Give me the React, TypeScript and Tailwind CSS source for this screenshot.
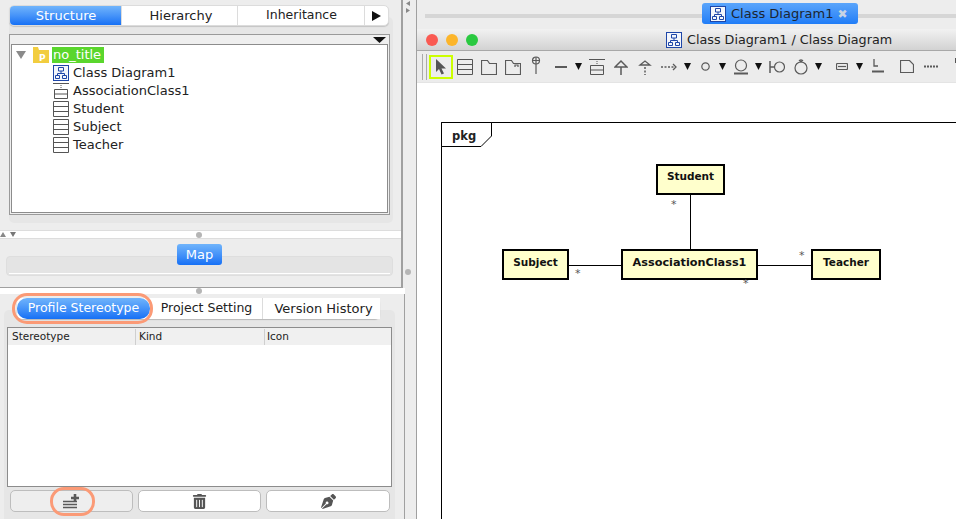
import type { ReactNode } from "react";
import { FaPenNib, FaTrashAlt } from "react-icons/fa";

const ink = "#5a5a5a";

function Tri({ className }: { className: string }) {
  return (
    <svg className={className} width="7" height="7" viewBox="0 0 7 7">
      <path d="M0 0H7L3.5 7Z" fill="#111" />
    </svg>
  );
}

function Icon({ className, w, h = 18, children }: { className: string; w: number; h?: number; children: ReactNode }) {
  return (
    <svg className={className} width={w} height={h} viewBox={`0 0 ${w} ${h}`} fill="none" stroke={ink} strokeWidth="1.2">
      {children}
    </svg>
  );
}

function ClassIcon() {
  return (
    <svg className="shrink-0" width="16" height="16" viewBox="0 0 16 16" fill="none" stroke="#555" strokeWidth="1">
      <path d="M.5.5h15v15H.5zM.5 5.5h15M.5 10.5h15" />
    </svg>
  );
}

function DiagramIcon({ size = 16 }: { size?: number }) {
  return (
    <svg className="shrink-0" width={size} height={size} viewBox="0 0 16 16" fill="none" stroke="#1e46a8" strokeWidth="1">
      <rect x=".5" y=".5" width="15" height="15" fill="#f4f6fb" />
      <path d="M5.5 2.5h5v3.500h-5zM2.500 10.500h4v3h-4zM9.500 10.500h4v3h-4zM8 6v2.500M4.500 10.500v-2h7v2" />
    </svg>
  );
}

function AssocIcon({ className = "" }: { className?: string }) {
  return (
    <svg className={`shrink-0 ${className}`} width="16" height="16" viewBox="0 0 16 16" fill="none" stroke="#555" strokeWidth="1">
      <path d="M0 .5h16M8 2v1M8 4v1M1.500 6.500h13v9h-13zM1.500 11h13" />
    </svg>
  );
}

function TreeRow({ icon, label }: { icon: ReactNode; label: string }) {
  return (
    <div className="flex h-[18px] items-center gap-[4px] pl-[41px]">
      {icon}
      <span>{label}</span>
    </div>
  );
}

function Toolbar() {
  return (
    <div className="flex h-[32px] shrink-0 items-center border-b border-[#e4e4e4] bg-[#ececec]">
      <div className="ml-[5px] h-[26px] w-[2px] border-l border-[#aaa]" />
      <div className="ml-[2px] h-[26px] w-[2px] border-l border-[#aaa]" />
      <div className="ml-[1px] flex h-[24px] w-[24px] items-center justify-center border-2 border-[#ccff00]">
        <svg width="12" height="16" viewBox="0 0 12 16">
          <path d="M1 0v13l3-3 2.500 5.500 2.500-1-2.500-5H11Z" fill="#555" />
        </svg>
      </div>
      <div className="ml-[4px]"><ClassIcon /></div>
      <Icon className="ml-[8px]" w={16} h={16}><path d="M.5 15.500V1.500h6l2 3h7v11z" /></Icon>
      <Icon className="ml-[8px]" w={16} h={16}><path d="M.5 15.500V1.500h6l2 3h7v11zM10 8V6h3v2" /></Icon>
      <Icon className="ml-[10px] -mt-[4px]" w={10} h={18}><circle cx="5" cy="4.500" r="3.500" /><path d="M5 1v17M1.500 4.500h7" /></Icon>
      <Icon className="ml-[14px]" w={12} h={4}><path d="M0 2h12" strokeWidth="2" /></Icon>
      <Tri className="ml-[8px]" />
      <div className="ml-[7px]"><AssocIcon /></div>
      <Icon className="ml-[9px]" w={14} h={16}><path d="M1 8l6-6 6 6zM7 8v8" strokeWidth="1.500" /></Icon>
      <Icon className="ml-[10px]" w={14} h={16}><path d="M2 6l5-4 5 4z" strokeWidth="1.300" /><path d="M7 8v8" strokeWidth="1.500" strokeDasharray="2 1.500" /></Icon>
      <Icon className="ml-[9px]" w={16} h={10}><path d="M0 5h13" strokeWidth="1.500" strokeDasharray="2 1.500" /><path d="M12 2l3 3-3 3" strokeWidth="1.300" /></Icon>
      <Tri className="ml-[7px]" />
      <Icon className="ml-[10px]" w={9} h={9}><circle cx="4.500" cy="4.500" r="3.700" /></Icon>
      <Tri className="ml-[9px]" />
      <Icon className="ml-[8px]" w={14} h={16}><circle cx="7" cy="6.500" r="5.500" /><path d="M0 14.500h14" strokeWidth="2" /></Icon>
      <Tri className="ml-[7px]" />
      <Icon className="ml-[7px]" w={16} h={12}><circle cx="10.500" cy="6" r="5" /><path d="M1 0v12M1 6h4" strokeWidth="1.500" /></Icon>
      <Icon className="ml-[9px]" w={14} h={16}><circle cx="7" cy="9" r="6" /><path d="M7 0v3M5 1l2 2 2-2" /></Icon>
      <Tri className="ml-[7px]" />
      <Icon className="ml-[14px]" w={12} h={7}><rect x=".5" y=".5" width="11" height="6" rx="1" /><path d="M2 3.500h8" /></Icon>
      <Tri className="ml-[8px]" />
      <Icon className="ml-[9px] -mt-[2px]" w={12} h={14}><path d="M2 0v7h4" strokeWidth="1.300" /><path d="M0 12.500h12" strokeWidth="2" /></Icon>
      <Icon className="ml-[16px]" w={14} h={13}><path d="M.5.500h9l4 4v8H.5z" /></Icon>
      <Icon className="ml-[10px]" w={14} h={3}><path d="M0 1.500h14" strokeWidth="2" strokeDasharray="2 1" /></Icon>
      <div className="ml-[17px] h-[5px] w-[1px] -translate-y-[6px] bg-[#555]" />
    </div>
  );
}

function UmlBox({ className, label }: { className: string; label: string }) {
  return (
    <div className={`absolute flex h-[31px] items-center justify-center border-2 border-black bg-[#ffffcc] font-bold text-[#111] ${className}`}>
      {label}
    </div>
  );
}

function Star({ className }: { className: string }) {
  return <span className={`absolute text-[11px] leading-none text-[#555] ${className}`}>*</span>;
}

function Canvas() {
  return (
    <div className="relative min-h-0 flex-1 overflow-hidden bg-white">
      <div className="absolute left-[24px] top-[39px] h-[500px] w-[600px] border border-black" />
      <svg className="absolute left-[24px] top-[39px]" width="52" height="26" viewBox="0 0 52 26" fill="#fff" stroke="#000">
        <path d="M.5.500H50.500V14L40 24.500H.5Z" />
      </svg>
      <span className="absolute left-[35px] top-[45px] text-[11.500px] font-bold text-[#222]">pkg</span>
      <svg className="absolute left-[0px] top-[0px]" width="539" height="220" viewBox="0 0 539 220" stroke="#000" strokeWidth="1">
        <path d="M273.500 112v55M152 182.500h52M341 182.500h54" />
      </svg>
      <UmlBox className="left-[239px] top-[81px] w-[69px] pb-[5px] text-[10.500px]" label="Student" />
      <UmlBox className="left-[85px] top-[166px] w-[67px] pb-[3px] text-[10.500px]" label="Subject" />
      <UmlBox className="left-[204px] top-[166px] w-[137px] pb-[3px] text-[11.250px]" label="AssociationClass1" />
      <UmlBox className="left-[394px] top-[166px] w-[70px] pb-[3px] text-[10.500px]" label="Teacher" />
      <Star className="left-[254px] top-[116px]" />
      <Star className="left-[158px] top-[185px]" />
      <Star className="left-[382px] top-[167px]" />
      <Star className="left-[326px] top-[195px]" />
    </div>
  );
}

function TabButton({ label, className, active }: { label: string; className: string; active?: boolean }) {
  return (
    <div
      className={`flex items-center justify-center ${className} ${
        active ? "bg-gradient-to-b from-[#70b4fb] to-[#1470f5] text-white" : "border-l border-[#dcdcdc] bg-white text-[#222]"
      }`}
    >
      {label}
    </div>
  );
}

export default function App() {
  return (
    <div
      className="relative flex h-[519px] w-[956px] overflow-hidden bg-[#ededed] text-[13px] text-[#222]"
      style={{ fontFamily: '"DejaVu Sans", sans-serif' }}
    >
      {/* left column */}
      <div className="flex w-[405px] shrink-0 flex-col">
        <div className="h-[288px] w-[403px] shrink-0 border-b border-r-2 border-[#a0a0a0]">
          <div className="relative z-10 ml-[9px] mt-[5px] flex h-[21px] w-[380px] overflow-hidden rounded-[5px] border border-[#dcdcdc] bg-white shadow-[0_1px_1px_rgba(0,0,0,0.15)]">
            <TabButton active label="Structure" className="w-[111px] pl-[1px]" />
            <TabButton label="Hierarchy" className="w-[116px] pl-[3px]" />
            <TabButton label="Inheritance" className="w-[127px] pl-[1px] text-[12.500px]" />
            <div className="flex flex-1 items-center justify-center border-l border-[#dcdcdc]">
              <svg width="9" height="10" viewBox="0 0 9 10"><path d="M0 0L9 5L0 10Z" fill="#111" /></svg>
            </div>
          </div>
          <div className="-mt-[9px] ml-[9px] h-[206px] w-[384px] rounded-[5px] bg-[#e6e6e6] pt-[17px]">
            <div className="h-[181px] w-[381px] border border-[#9a9a9a] bg-[#efefef] px-[1px]">
              <div className="flex h-[9px] justify-end pr-[2px] pt-[2px]">
                <svg width="13" height="6" viewBox="0 0 13 6"><path d="M0 0H13L6.500 6Z" fill="#111" /></svg>
              </div>
              <div className="h-[169px] border border-[#8c8c8c] bg-white pt-[1px]">
                <div className="flex h-[18px] items-center pl-[4px]">
                  <svg width="10" height="8" viewBox="0 0 10 8"><path d="M0 0H10L5 8Z" fill="#8a8a8a" /></svg>
                  <svg className="ml-[7px]" width="16" height="16" viewBox="0 0 16 16">
                    <path d="M0 0H5L6 3H16V16H0Z" fill="#f2cd3f" />
                    <text x="6" y="13.500" fontSize="9" fontWeight="700" fill="#fff" fontFamily="DejaVu Sans">P</text>
                  </svg>
                  <span className="ml-[3px] flex h-[16px] w-[52px] items-center bg-[#5ad62d] pl-[1px] text-white">no_title</span>
                </div>
                <TreeRow icon={<DiagramIcon />} label="Class Diagram1" />
                <TreeRow icon={<AssocIcon />} label="AssociationClass1" />
                <TreeRow icon={<ClassIcon />} label="Student" />
                <TreeRow icon={<ClassIcon />} label="Subject" />
                <TreeRow icon={<ClassIcon />} label="Teacher" />
              </div>
            </div>
          </div>
          {/* splitter */}
          <div className="mt-[7px] flex h-[9px] items-center justify-between border-y border-[#dddddd] bg-white pr-[199px]">
            <div className="flex gap-[4px]">
              <svg width="6" height="5" viewBox="0 0 6 5"><path d="M3 0L6 5H0Z" fill="#888" /></svg>
              <svg width="6" height="5" viewBox="0 0 6 5"><path d="M0 0H6L3 5Z" fill="#777" /></svg>
            </div>
            <div className="h-[6px] w-[6px] rounded-full bg-[#b5b5b5]" />
          </div>
          {/* map */}
          <div className="relative z-10 ml-[177px] mt-[5px] flex h-[21px] w-[45px] items-center justify-center rounded-[3px] bg-gradient-to-b from-[#70b4fb] to-[#1470f5] text-white">
            Map
          </div>
          <div className="-mt-[9px] ml-[6px] h-[20px] w-[387px] rounded-[4px] border border-[#dedede] bg-[#e4e4e4]">
            <div className="mx-[2px] mt-[16px] h-[1px] bg-white" />
          </div>
        </div>
        <div className="flex h-[6px] shrink-0 justify-center bg-white pr-[8px]">
          <div className="h-[6px] w-[6px] rounded-full bg-[#b5b5b5]" />
        </div>
        {/* bottom pane */}
        <div className="min-h-0 flex-1 border-r border-[#a0a0a0]">
          <div className="relative z-10 ml-[17px] mt-[4px] flex h-[21px] w-[363px] rounded-[5px] bg-white shadow-[0_1px_1px_rgba(0,0,0,0.2)]">
            <TabButton active label="Profile Stereotype" className="w-[133px] rounded-[10px] text-[12.500px]" />
            <TabButton label="Project Setting" className="w-[112px] border-l-0 pl-[1px] text-[12.500px]" />
            <TabButton label="Version History" className="w-[118px] pl-[4px]" />
            <div className="absolute -left-[5px] -top-[5px] h-[31px] w-[141px] rounded-[15px] border-[3px] border-[#fb9a76]" />
          </div>
          <div className="-mt-[9px] ml-[4px] h-[300px] w-[391px] rounded-[5px] bg-[#e6e6e6] px-[3px] pt-[17px]">
            <div className="h-[160px] w-[385px] border border-[#8c8c8c] bg-white">
              <div className="flex h-[17px] items-center bg-[#f0f0f0] pt-[1px] text-[10.500px] text-[#222]">
                <div className="w-[127px] pl-[4px]">Stereotype</div>
                <div className="w-[129px] border-l border-[#cfcfcf] pl-[3px]">Kind</div>
                <div className="flex-1 border-l border-[#cfcfcf] pl-[2px]">Icon</div>
              </div>
            </div>
            <div className="mt-[3px] flex gap-[5px] pl-[3px]">
              <div className="relative flex h-[22px] w-[123px] items-center justify-center rounded-[5px] border border-[#bdbdbd] bg-[#eeeeee]">
                <svg width="17" height="15" viewBox="0 0 17 15">
                  <path d="M0 7.500h14M0 10.500h14M0 13.500h14" stroke={ink} strokeWidth="1.600" />
                  <path d="M12 0v8M8 4h8" stroke={ink} strokeWidth="2.600" />
                </svg>
                <div className="absolute left-[39px] -top-[4px] h-[29px] w-[45px] rounded-[14px] border-[3px] border-[#fb9a76]" />
              </div>
              <div className="flex h-[22px] w-[123px] items-center justify-center rounded-[5px] border border-[#bdbdbd] bg-white">
                <FaTrashAlt className="text-[15px] text-[#555]" />
              </div>
              <div className="flex h-[22px] w-[124px] items-center justify-center rounded-[5px] border border-[#bdbdbd] bg-white">
                <FaPenNib className="text-[15px] text-[#555]" />
              </div>
            </div>
          </div>
        </div>
      </div>

      {/* splitter between left and right */}
      <div className="relative w-[12px] shrink-0 border-r border-[#a0a0a0]">
        <svg className="absolute left-[0px] top-[1px]" width="6" height="12" viewBox="0 0 6 12">
          <path d="M5 0V5L1 2.500ZM1 7V12L5 9.500Z" fill="#888" />
        </svg>
        <div className="absolute left-[0px] top-[269px] h-[6px] w-[6px] rounded-full bg-[#b5b5b5]" />
      </div>

      {/* right column */}
      <div className="flex min-w-0 flex-1 flex-col">
        <div className="relative h-[29px] shrink-0">
          <div className="absolute inset-x-[0px] top-[14px] ml-[8px] h-[4px] bg-[#d6d6d6]" />
          <div className="absolute left-[285px] top-[3px] flex h-[21px] w-[156px] items-center rounded-[3px] bg-gradient-to-b from-[#5aa5fb] to-[#1f7df7] pl-[8px] text-[#1c2530]">
            <DiagramIcon />
            <span className="ml-[5px]">Class Diagram1</span>
            <span className="ml-[4px] text-[12px] font-bold text-[#c8d4e4]">✖</span>
          </div>
        </div>
        <div className="flex h-[22px] shrink-0 items-center border-b border-[#a8a8a8] bg-gradient-to-b from-[#f2f2f2] to-[#d2d2d2] pl-[9px]">
          <div className="h-[12px] w-[12px] rounded-full bg-[#fa5a52]" />
          <div className="ml-[8px] h-[12px] w-[12px] rounded-full bg-[#fcb52a]" />
          <div className="ml-[8px] h-[12px] w-[12px] rounded-full bg-[#2ac940]" />
          <div className="ml-[188px] flex items-center gap-[5px] text-[12.750px]">
            <DiagramIcon />
            <span>Class Diagram1 / Class Diagram</span>
          </div>
        </div>
        <Toolbar />
        <Canvas />
      </div>
    </div>
  );
}
